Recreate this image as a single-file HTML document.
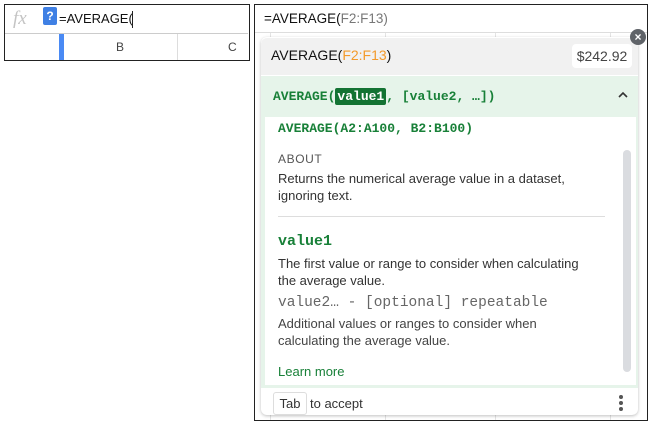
<!DOCTYPE html>
<html><head><style>
body{margin:0;width:650px;height:423px;background:#fff;position:relative;overflow:hidden;font-family:"Liberation Sans",Arial,sans-serif;}
.a{position:absolute}
.mono{font-family:"Liberation Mono","DejaVu Sans Mono",monospace}
</style></head><body>
<div class="a" style="left:4px;top:4px;width:244px;height:55px;border:1px solid #222;"></div>
<div class="a" style="left:13px;top:8px;font-family:'Liberation Serif',serif;font-style:italic;font-size:19px;color:#c4c4c4">fx</div>
<div class="a" style="left:43px;top:7px;width:14px;height:18px;background:#3f80e4;border-radius:2px;color:#fff;font-size:12px;font-weight:bold;text-align:center;line-height:18px">?</div>
<div class="a" style="left:59px;top:11px;font-size:13px;color:#111">=AVERAGE(</div>
<div class="a" style="left:132px;top:11px;width:1px;height:17px;background:#222"></div>
<div class="a" style="left:5px;top:33px;width:243px;height:1px;background:#ccc"></div>
<div class="a" style="left:59px;top:34px;width:5px;height:26px;background:#4a8af4"></div>
<div class="a" style="left:177px;top:34px;width:1px;height:26px;background:#ddd"></div>
<div class="a" style="left:116px;top:40px;font-size:12px;color:#444">B</div>
<div class="a" style="left:228px;top:40px;font-size:12px;color:#444">C</div>
<div class="a" style="left:254px;top:4px;width:392px;height:415px;border:1px solid #222;"></div>
<div class="a" style="left:255px;top:32px;width:392px;height:1px;background:#ddd"></div>
<div class="a" style="left:264px;top:11px;font-size:13.5px;color:#111">=AVERAGE(<span style="color:#777">F2:F13)</span></div>
<div class="a" style="left:270px;top:33px;width:1px;height:387px;background:#e4e4e4"></div>
<div class="a" style="left:385px;top:33px;width:1px;height:387px;background:#e4e4e4"></div>
<div class="a" style="left:495px;top:33px;width:1px;height:387px;background:#e4e4e4"></div>
<div class="a" style="left:610px;top:33px;width:1px;height:387px;background:#e4e4e4"></div>
<div class="a" style="left:261px;top:37px;width:377px;height:378px;background:#fff;border-radius:6px;box-shadow:0 1px 3px rgba(0,0,0,.25)"></div>
<div class="a" style="left:261px;top:38px;width:377px;height:37px;background:#f1f1f1;border-radius:6px 6px 0 0"></div>
<div class="a" style="left:271px;top:47px;font-size:14px;color:#111">AVERAGE(<span style="color:#f39a2b">F2:F13</span>)</div>
<div class="a" style="left:572px;top:44px;width:60px;height:24px;background:#fff;border-radius:4px;font-size:14px;color:#444;text-align:center;line-height:24px">$242.92</div>
<div class="a" style="left:630px;top:29px;width:16px;height:16px;border-radius:50%;background:#5f6368;color:#fff;font-size:12px;text-align:center;line-height:16px;font-weight:bold">×</div>
<div class="a" style="left:261px;top:76px;width:377px;height:312px;background:#e6f4ea"></div>
<div class="a mono" style="left:273px;top:89px;font-size:13px;font-weight:bold;color:#188038">AVERAGE(<span style="background:#137333;color:#fff;border-radius:2px;padding:1px 2px">value1</span>, [value2, …])</div>
<svg class="a" style="left:617px;top:91px" width="12" height="8" viewBox="0 0 12 8"><path d="M2 6 L6 2 L10 6" fill="none" stroke="#333" stroke-width="1.6"/></svg>
<div class="a" style="left:265px;top:117px;width:371px;height:268px;background:#fff"></div>
<div class="a mono" style="left:278px;top:121px;font-size:13px;font-weight:bold;color:#188038">AVERAGE(A2:A100, B2:B100)</div>
<div class="a" style="left:278px;top:152px;font-size:12px;color:#555;letter-spacing:.6px">ABOUT</div>
<div class="a" style="left:278px;top:170px;font-size:13px;color:#333;line-height:17px;width:300px">Returns the numerical average value in a dataset, ignoring text.</div>
<div class="a" style="left:278px;top:216px;width:327px;height:1px;background:#ddd"></div>
<div class="a mono" style="left:278px;top:233px;font-size:15px;font-weight:bold;color:#188038">value1</div>
<div class="a" style="left:278px;top:255px;font-size:13px;color:#333;line-height:17px;width:315px">The first value or range to consider when calculating the average value.</div>
<div class="a mono" style="left:278px;top:295px;font-size:14.5px;color:#666">value2… - [optional] repeatable</div>
<div class="a" style="left:278px;top:315px;font-size:13px;color:#444;line-height:17px;width:275px">Additional values or ranges to consider when calculating the average value.</div>
<div class="a" style="left:278px;top:364px;font-size:13px;color:#188038">Learn more</div>
<div class="a" style="left:623px;top:150px;width:8px;height:222px;background:#dadce0;border-radius:4px"></div>
<div class="a" style="left:273px;top:392px;width:32px;height:21px;border:1px solid #ddd;border-radius:3px;font-size:13px;color:#333;text-align:center;line-height:21px">Tab</div>
<div class="a" style="left:310px;top:396px;font-size:13px;color:#333">to accept</div>
<div class="a" style="left:619px;top:395px;width:4px;height:4px;border-radius:2px;background:#555"></div>
<div class="a" style="left:619px;top:401px;width:4px;height:4px;border-radius:2px;background:#555"></div>
<div class="a" style="left:619px;top:407px;width:4px;height:4px;border-radius:2px;background:#555"></div>
</body></html>
